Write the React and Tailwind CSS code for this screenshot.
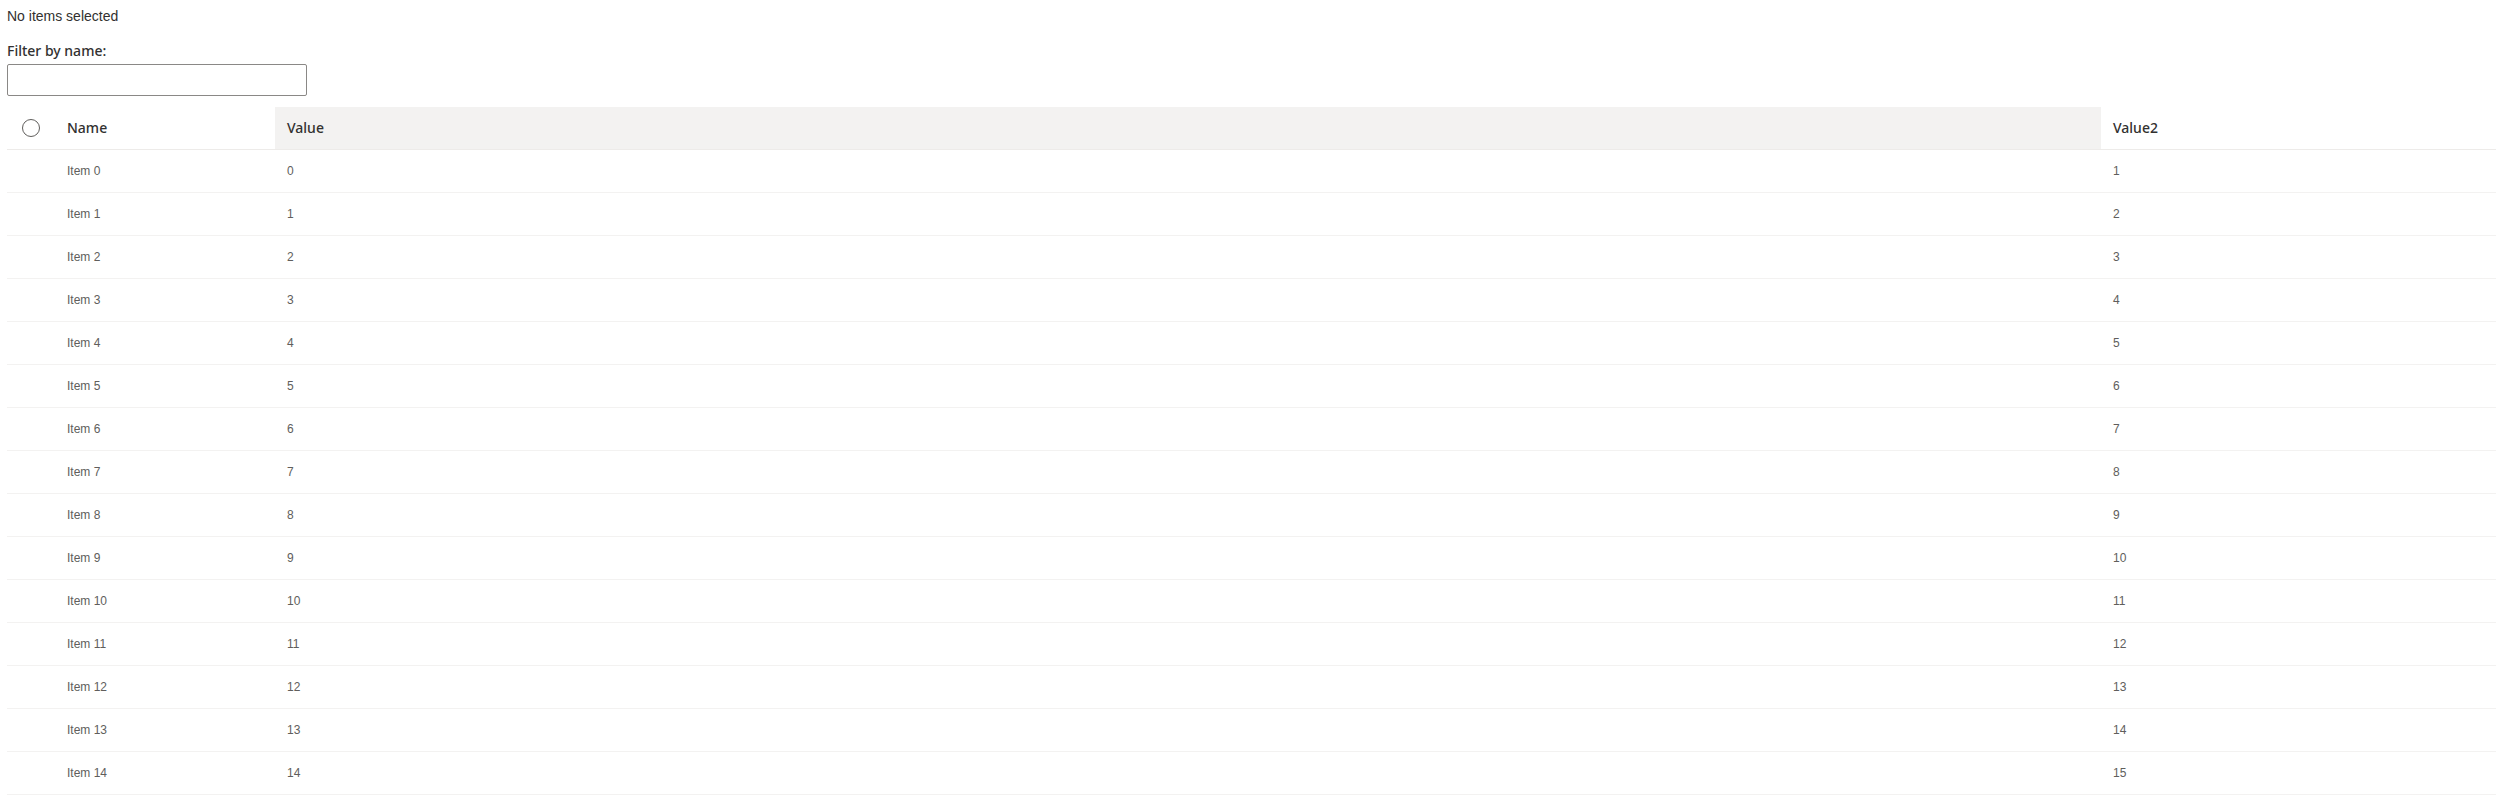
import React from 'react'

const items = Array.from({ length: 15 }, (_, i) => ({ name: `Item ${i}`, value: i, value2: i + 1 }))

const cols = 'grid grid-cols-[48px_220px_1826px_1fr]'
// semibold labels: Liberation has no 600 weight, so borrow Noto Sans for those
const semi = "font-['Segoe_UI','Noto_Sans',sans-serif] font-medium"

export default function App() {
    return (
        <div className="min-h-screen bg-white pl-[7px] font-['Segoe_UI','Liberation_Sans',sans-serif] text-[14px] text-[#323130]">
            <div className="pt-[6px] leading-[20px]">No items selected</div>

            {/* Filter */}
            <div className={`mt-[15px] leading-[20px] ${semi}`}>Filter by name:</div>
            <div className="mt-[3px] h-[32px] w-[300px] rounded-[2px] border border-[#8a8886] bg-white" />

            {/* Header */}
            <div className={`${cols} mt-[11px] h-[43px] border-b border-[#edebe9] ${semi}`}>
                <div className="flex items-center justify-center">
                    <span className="h-[18px] w-[18px] rounded-full border border-[#605e5c]" />
                </div>
                <div className="flex items-center pl-[12px] pb-[1px]">Name</div>
                <div className="flex items-center bg-[#f3f2f1] pl-[12px] pb-[1px]">Value</div>
                <div className="flex items-center pl-[12px] pb-[1px]">Value2</div>
            </div>

            {/* Rows */}
            {items.map((item) => (
                <div key={item.name} className={`${cols} h-[43px] border-b border-[#f3f2f1] text-[12px] text-[#605e5c]`}>
                    <div />
                    <div className="flex items-center pl-[12px]">{item.name}</div>
                    <div className="flex items-center pl-[12px]">{item.value}</div>
                    <div className="flex items-center pl-[12px]">{item.value2}</div>
                </div>
            ))}
        </div>
    )
}
